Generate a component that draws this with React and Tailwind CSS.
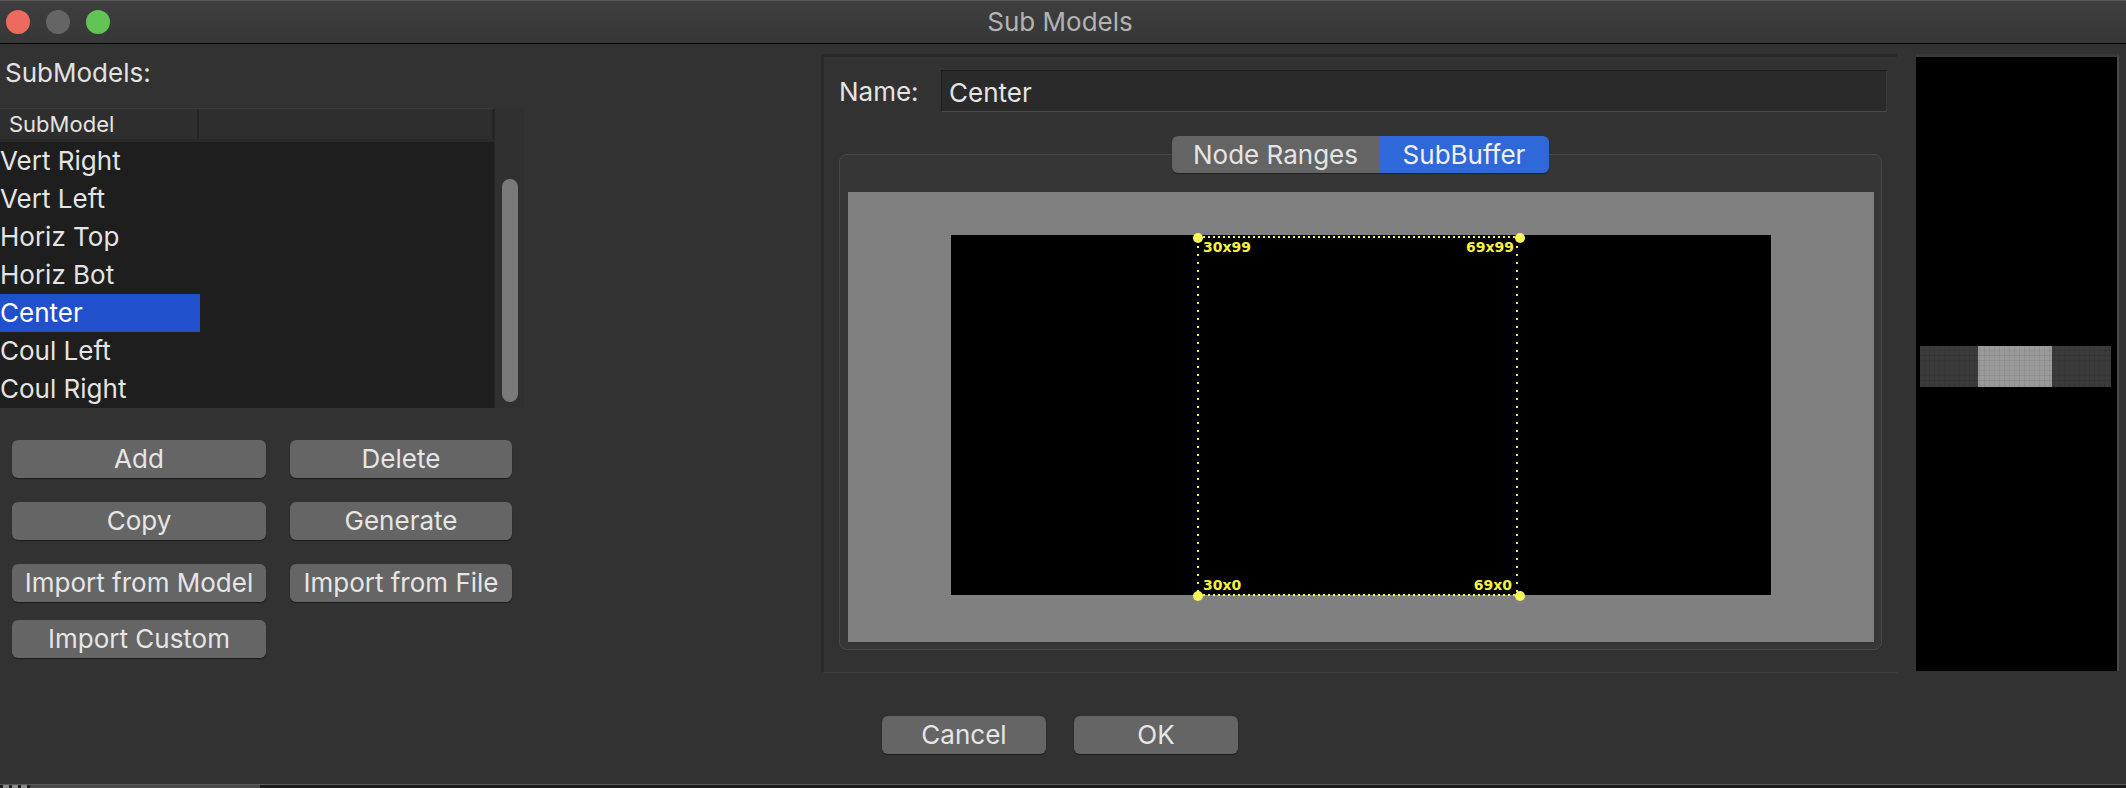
import React from "react";
import clsx from "clsx";

const subModels = ["Vert Right", "Vert Left", "Horiz Top", "Horiz Bot", "Center", "Coul Left", "Coul Right"];

const Btn = ({ children, className }) => (
    <button
        className={clsx(
            "flex h-[38px] items-center justify-center rounded-[6px] bg-[#656565] text-[26px] leading-none text-[#e6e6e6] shadow-[0_1px_1px_rgba(0,0,0,0.45)]",
            className
        )}
    >
        {children}
    </button>
);

// yellow overlay for the subbuffer range, drawn on the 820x360 black area
const RangeOverlay = () => (
    <>
        <svg className="absolute left-0 top-0 overflow-visible" width="820" height="360">
            <line x1="247" y1="2" x2="569" y2="2" stroke="#f4f44a" strokeWidth="2" strokeDasharray="2 3" />
            <line x1="247" y1="360" x2="569" y2="360" stroke="#f4f44a" strokeWidth="2" strokeDasharray="2 3" />
            <line x1="247" y1="3" x2="247" y2="360" stroke="#f4f44a" strokeWidth="2" strokeDasharray="2 6" />
            <line x1="566" y1="3" x2="566" y2="360" stroke="#f4f44a" strokeWidth="2" strokeDasharray="2 6" />
            <circle cx="247" cy="3" r="5" fill="#f7f75a" />
            <circle cx="569" cy="3" r="5" fill="#f7f75a" />
            <circle cx="247" cy="361" r="5" fill="#f7f75a" />
            <circle cx="569" cy="361" r="5" fill="#f7f75a" />
        </svg>
        <span className="absolute left-[252px] top-[5px] text-[14px] font-bold leading-[14px] text-[#f4f43e]">30x99</span>
        <span className="absolute right-[257px] top-[5px] text-[14px] font-bold leading-[14px] text-[#f4f43e]">69x99</span>
        <span className="absolute left-[252px] top-[343px] text-[14px] font-bold leading-[14px] text-[#f4f43e]">30x0</span>
        <span className="absolute right-[259px] top-[343px] text-[14px] font-bold leading-[14px] text-[#f4f43e]">69x0</span>
    </>
);

const App = () => {
    return (
        <div className="flex h-[788px] w-[2126px] flex-col overflow-hidden bg-[#323232] font-[family-name:Inter,'Liberation_Sans',sans-serif] text-[#e4e4e4]">
            {/* title bar */}
            <div className="grid h-[44px] shrink-0 grid-cols-[1fr_auto_1fr] items-center border-b border-t border-b-black border-t-[#5a5a5a] bg-gradient-to-b from-[#3e3e3e] to-[#373737]">
                <div className="flex items-center gap-[16px] pl-[6px]">
                    <span className="h-[24px] w-[24px] rounded-full bg-[#ed6a5e]" />
                    <span className="h-[24px] w-[24px] rounded-full bg-[#656565]" />
                    <span className="h-[24px] w-[24px] rounded-full bg-[#62c454]" />
                </div>
                <div className="pr-[6px] text-[26px] leading-none text-[#b3b3b3]">Sub Models</div>
                <div />
            </div>

            <div className="flex h-[629px] shrink-0 items-start">
                {/* left column */}
                <div className="w-[524px] shrink-0 pt-[14px]">
                    <div className="h-[30px] pl-[5px] text-[26px] leading-[30px] text-[#e2e2e2]">SubModels:</div>
                    <div className="mt-[20px] flex h-[300px] bg-[#1e1e1e]">
                        <div className="w-[494px]">
                            <div className="flex h-[34px] border-b-[3px] border-t border-b-[#292929] border-t-[#3a3a3a] bg-[#2e2e2e] text-[22px] leading-[30px] text-[#e4e4e4]">
                                <div className="w-[199px] border-r-2 border-[#242424] pl-[9px]">SubModel</div>
                                <div className="flex-1 border-r-2 border-[#242424]" />
                            </div>
                            {subModels.map((name) => (
                                <div key={name} className="flex h-[38px] items-center">
                                    <div
                                        className={clsx(
                                            "flex h-[38px] w-[200px] items-center text-[26px] leading-none",
                                            name === "Center" ? "bg-[#2150cd] text-white" : "text-[#e4e4e4]"
                                        )}
                                    >
                                        {name}
                                    </div>
                                </div>
                            ))}
                        </div>
                        <div className="w-[30px] border-l border-[#262626] bg-[#303030] pl-[7px] pt-[71px]">
                            <div className="h-[223px] w-[16px] rounded-full bg-[#7a7a7a]" />
                        </div>
                    </div>

                    <div className="mt-[32px] flex flex-col gap-[24px] pl-[12px]">
                        <div className="flex gap-[24px]">
                            <Btn className="w-[254px]">Add</Btn>
                            <Btn className="w-[222px]">Delete</Btn>
                        </div>
                        <div className="flex gap-[24px]">
                            <Btn className="w-[254px]">Copy</Btn>
                            <Btn className="w-[222px]">Generate</Btn>
                        </div>
                        <div className="flex gap-[24px]">
                            <Btn className="w-[254px]">Import from Model</Btn>
                            <Btn className="w-[222px]">Import from File</Btn>
                        </div>
                    </div>
                    <div className="mt-[18px] pl-[12px]">
                        <Btn className="w-[254px]">Import Custom</Btn>
                    </div>
                </div>

                {/* editor panel */}
                <div className="ml-[297px] mt-[10px] flex h-[619px] w-[1076px] shrink-0 flex-col border-b border-l-[3px] border-t-[3px] border-b-[#3e3e3e] border-l-[#292929] border-t-[#292929] pl-[15px] pr-[10px] pt-[13px]">
                    <div className="flex items-center">
                        <div className="w-[102px] pt-[2px] text-[26px] leading-none text-[#e4e4e4]">Name:</div>
                        <div className="flex h-[42px] flex-1 items-center border border-b-[#4a4a4a] border-l-[#1c1c1c] border-r-[#3a3a3a] border-t-[#1c1c1c] bg-[#2a2a2a] pl-[7px] pt-[3px] text-[26px] leading-none text-[#e4e4e4]">
                            Center
                        </div>
                    </div>

                    <div className="relative z-10 mt-[24px] flex justify-center pr-[5px]">
                        <div className="flex h-[37px] overflow-hidden rounded-[6px] shadow-[0_1px_1px_rgba(0,0,0,0.45)]">
                            <div className="flex w-[207px] items-center justify-center bg-[#646464] text-[26px] leading-none text-[#e4e4e4]">
                                Node Ranges
                            </div>
                            <div className="flex w-[170px] items-center justify-center bg-[#2f69d9] text-[26px] leading-none text-[#f0f0f0]">
                                SubBuffer
                            </div>
                        </div>
                    </div>

                    <div className="-mt-[19px] mr-[5px] h-[496px] rounded-[8px] border border-[#474747] bg-[#363636] pb-[7px] pl-[8px] pr-[7px] pt-[37px]">
                        <div className="flex h-[450px] justify-center bg-[#808080] pt-[43px]">
                            <div className="relative h-[360px] w-[820px] bg-black font-[family-name:'DejaVu_Sans',sans-serif]">
                                <RangeOverlay />
                            </div>
                        </div>
                    </div>
                </div>

                {/* model preview */}
                <div className="ml-[19px] mt-[10px] h-[617px] w-[203px] shrink-0 border-r-2 border-t-[3px] border-r-[#4a4a4a] border-t-[#3a3a3a] bg-black pl-[4px] pt-[289px]">
                    <svg width="191" height="41">
                        <defs>
                            <pattern id="grid" width="5" height="5" patternUnits="userSpaceOnUse">
                                <path d="M5 0V5M0 5H5" stroke="rgba(0,0,0,0.12)" strokeWidth="1" />
                            </pattern>
                        </defs>
                        <rect x="0" y="0" width="58" height="41" fill="#3b3b3b" />
                        <rect x="58" y="0" width="74" height="41" fill="#9b9b9b" />
                        <rect x="132" y="0" width="59" height="41" fill="#3b3b3b" />
                        <rect x="0" y="0" width="191" height="41" fill="url(#grid)" />
                    </svg>
                </div>
            </div>

            {/* dialog buttons */}
            <div className="mt-[43px] flex shrink-0 justify-center gap-[28px] pr-[6px]">
                <Btn className="w-[164px]">Cancel</Btn>
                <Btn className="w-[164px]">OK</Btn>
            </div>

            <div className="flex-1" />
            <div className="flex h-[4px] shrink-0 items-end gap-[3px] border-t border-[#5a5a5a] bg-[#1c1c1c] pl-[3px]">
                <span className="h-[3px] w-[6px] bg-[#8a8a8a]" />
                <span className="h-[3px] w-[6px] bg-[#8a8a8a]" />
                <span className="h-[3px] w-[6px] bg-[#8a8a8a]" />
                <span className="h-[3px] w-[230px] bg-[#4a4a4a]" />
            </div>
        </div>
    );
};

export default App;
